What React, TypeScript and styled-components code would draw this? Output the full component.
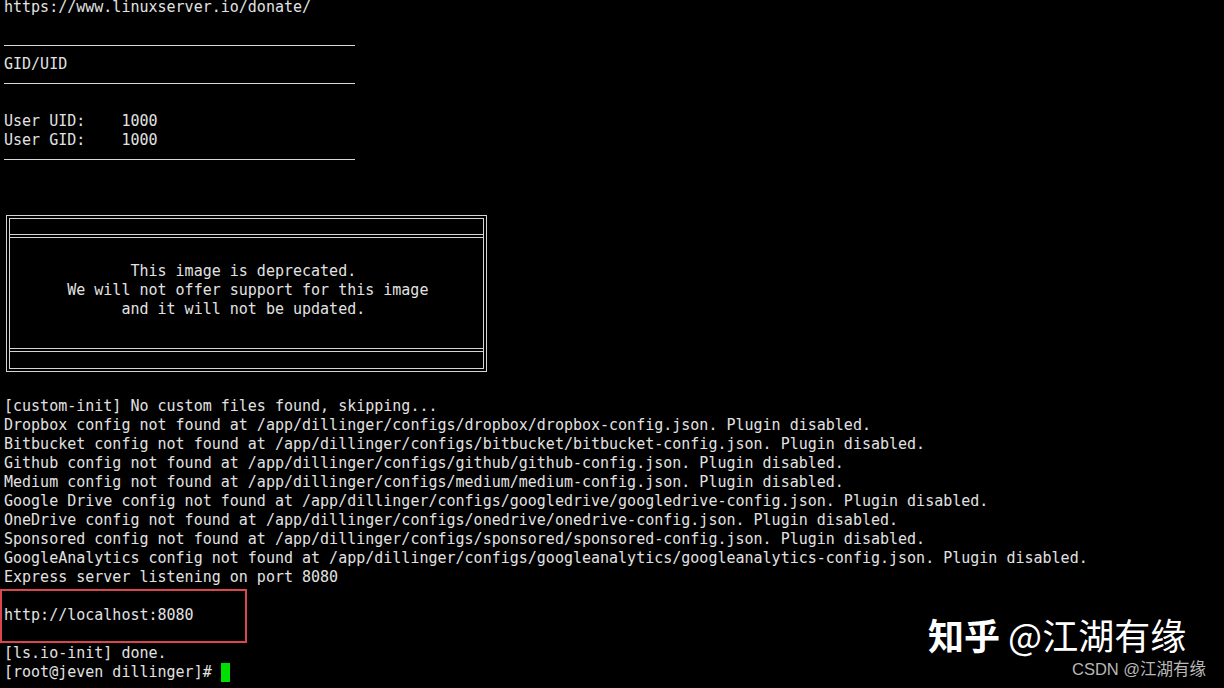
import React from 'react';
import styled, { createGlobalStyle } from 'styled-components';

const GlobalStyle = createGlobalStyle`
  html, body {
    margin: 0;
    padding: 0;
    background: #000;
    overflow: hidden;
  }
`;

const Screen = styled.div`
  position: relative;
  width: 1224px;
  height: 688px;
  background: #000;
  overflow: hidden;
`;

const Terminal = styled.div`
  padding-left: 4px;
  margin-top: -2px;
  font-family: 'DejaVu Sans Mono', 'Liberation Mono', monospace;
  font-size: 15px;
  color: #e2e2e2;
`;

const Line = styled.div`
  height: 19px;
  line-height: 19px;
  white-space: pre;
`;

const Rule = styled.div`
  height: 19px;
  display: flex;
  align-items: center;

  &::after {
    content: '';
    display: block;
    width: 351px;
    height: 1px;
    background: #d8d8d8;
  }
`;

const Panel = styled.div`
  width: 473px;
  margin: 8px 0 6px 2px;
  border: 4px double #d4d4d4;
`;

const PanelCap = styled.div<{ $h: number }>`
  height: ${p => p.$h}px;
`;

const PanelBody = styled.div`
  height: 118px;
  box-sizing: border-box;
  padding-top: 24px;
  border-top: 4px double #d4d4d4;
  border-bottom: 4px double #d4d4d4;
`;

/* the panel sits 6px right of the terminal grid, so pull columns back */
const NoticeLine = styled(Line)<{ $col: number }>`
  padding-left: calc(${p => p.$col}ch - 6px);
`;

const Highlight = styled.div`
  position: relative;

  &::after {
    content: '';
    position: absolute;
    left: -4px;
    top: 2px;
    width: 247px;
    height: 54px;
    box-sizing: border-box;
    border: 2.5px solid #d9474c;
  }
`;

const Cursor = styled.span`
  display: inline-block;
  width: 9px;
  height: 19px;
  vertical-align: top;
  background: #00e000;
`;

const Watermark = styled.div`
  position: absolute;
  left: 928px;
  top: 614px;
  font-family: 'Noto Sans CJK SC', 'Liberation Sans', sans-serif;
  font-size: 36px;
  font-weight: 400;
  line-height: 40px;
  color: #fff;
  white-space: pre;
`;

const Brand = styled.span`
  font-weight: 700;
`;

const SourceMark = styled.div`
  position: absolute;
  left: 1072px;
  top: 659px;
  font-family: 'Liberation Sans', 'Noto Sans CJK SC', sans-serif;
  font-size: 16.5px;
  line-height: 20px;
  color: #b8b8b8;
  white-space: pre;
`;

const configs = [
  'Dropbox config not found at /app/dillinger/configs/dropbox/dropbox-config.json. Plugin disabled.',
  'Bitbucket config not found at /app/dillinger/configs/bitbucket/bitbucket-config.json. Plugin disabled.',
  'Github config not found at /app/dillinger/configs/github/github-config.json. Plugin disabled.',
  'Medium config not found at /app/dillinger/configs/medium/medium-config.json. Plugin disabled.',
  'Google Drive config not found at /app/dillinger/configs/googledrive/googledrive-config.json. Plugin disabled.',
  'OneDrive config not found at /app/dillinger/configs/onedrive/onedrive-config.json. Plugin disabled.',
  'Sponsored config not found at /app/dillinger/configs/sponsored/sponsored-config.json. Plugin disabled.',
  'GoogleAnalytics config not found at /app/dillinger/configs/googleanalytics/googleanalytics-config.json. Plugin disabled.',
];

const notice = [
  { col: 14, text: 'This image is deprecated.' },
  { col: 7, text: 'We will not offer support for this image' },
  { col: 13, text: 'and it will not be updated.' },
];

const App: React.FC = () => {
  return (
    <Screen>
      <GlobalStyle />
      <Terminal>
        <Line>https://www.linuxserver.io/donate/</Line>
        <Line> </Line>
        <Rule />
        <Line>GID/UID</Line>
        <Rule />
        <Line> </Line>
        <Line>User UID:    1000</Line>
        <Line>User GID:    1000</Line>
        <Rule />
        <Line> </Line>
        <Line> </Line>

        <Panel>
          <PanelCap $h={15} />
          <PanelBody>
            {notice.map(n => (
              <NoticeLine key={n.text} $col={n.col}>{n.text}</NoticeLine>
            ))}
          </PanelBody>
          <PanelCap $h={16} />
        </Panel>

        <Line> </Line>
        <Line>[custom-init] No custom files found, skipping...</Line>
        {configs.map(text => (
          <Line key={text}>{text}</Line>
        ))}
        <Line>Express server listening on port 8080</Line>
        <Highlight>
          <Line> </Line>
          <Line>http://localhost:8080</Line>
          <Line> </Line>
        </Highlight>
        <Line>[ls.io-init] done.</Line>
        <Line>
          [root@jeven dillinger]# <Cursor />
        </Line>
      </Terminal>

      <Watermark>
        <Brand>知乎</Brand> @江湖有缘
      </Watermark>
      <SourceMark>CSDN @江湖有缘</SourceMark>
    </Screen>
  );
};

export default App;
